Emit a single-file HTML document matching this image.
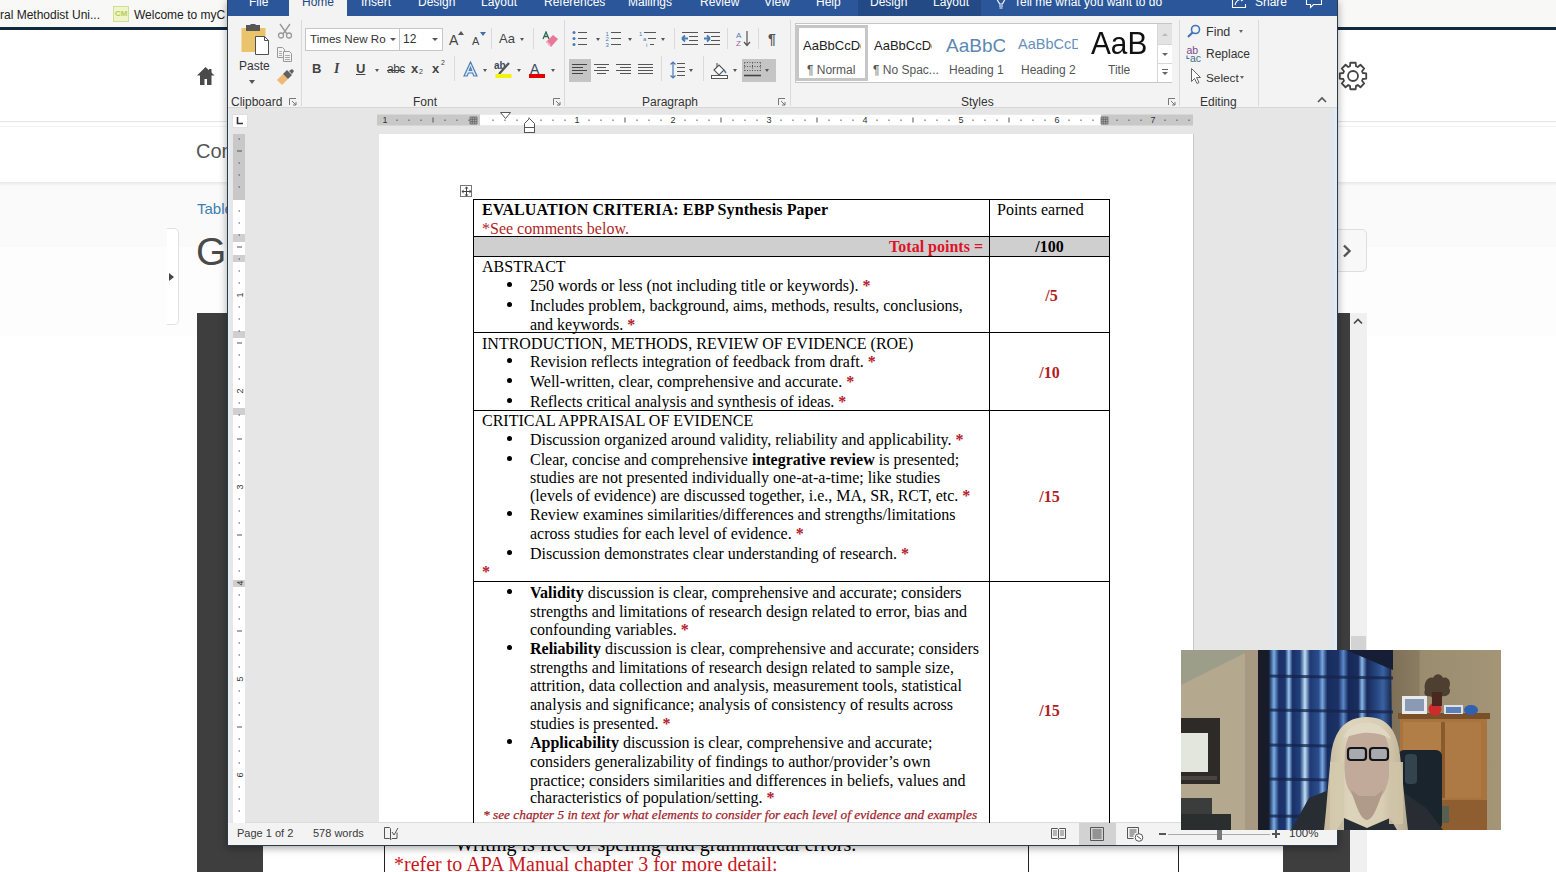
<!DOCTYPE html>
<html><head><meta charset="utf-8">
<style>
*{margin:0;padding:0;box-sizing:border-box}
html,body{width:1556px;height:872px;overflow:hidden;background:#fff;font-family:"Liberation Sans",sans-serif}
.a{position:absolute}
.t{position:absolute;white-space:nowrap}
/* browser */
#bm{left:0;top:0;width:1556px;height:27px;background:#f8f8f7}
#navy{left:0;top:27px;width:1556px;height:3px;background:#10293f}
#hdr{left:0;top:30px;width:1556px;height:91px;background:#fff}
.hl{left:0;width:1556px;height:1px;background:#e4e4e4}
#dark1{left:197px;top:313px;width:66px;height:559px;background:#3e3e3e}
#dark2{left:1283px;top:313px;width:67px;height:559px;background:#3e3e3e}
#pg2{left:263px;top:313px;width:1020px;height:559px;background:#fff}
#sb2{left:1350px;top:313px;width:17px;height:559px;background:#f0f0f0}
/* word */
#win{left:227px;top:0;width:1111px;height:846px;background:#e6e6e6;border:1px solid #2c3a4a;border-top:none;box-shadow:0 2px 8px rgba(0,0,0,.35)}
#tabs{left:0;top:0;width:1109px;height:16px;background:#2b579a}
.tab{position:absolute;top:-5px;font-size:12px;color:#fff;white-space:nowrap}
#rib{left:0;top:16px;width:1109px;height:92px;background:#f3f3f3;border-bottom:1px solid #d6d6d6}
.rl{position:absolute;font-size:12px;color:#262626;white-space:nowrap}
.vsep{position:absolute;width:1px;background:#dadada}
#status{left:0;top:822px;width:1109px;height:23px;background:#f3f3f3;border-top:1px solid #dcdcdc}
.page{left:151px;top:134px;width:815px;height:688px;background:#fff;border-right:1px solid #c8c8c8}
/* doc text */
.d{position:absolute;white-space:nowrap;font-family:"Liberation Serif",serif;font-size:16px;color:#000;line-height:1}
.r{color:#c0161c}
.b{font-weight:bold}
.bul{position:absolute;width:5px;height:5px;border-radius:50%;background:#000}
</style></head><body>
<!-- browser background -->
<div class="a" id="bm"></div>
<div class="t" style="left:0;top:8px;font-size:12px;color:#222">ral Methodist Uni...</div>
<div class="a" style="left:113px;top:6px;width:16px;height:16px;background:#eef5c8;border:1px solid #d3dd9a"></div>
<div class="t" style="left:115px;top:9px;font-size:8px;color:#b8cc55;font-weight:bold">CM</div>
<div class="t" style="left:134px;top:8px;font-size:12px;color:#222">Welcome to myC</div>
<div class="a" id="navy"></div>
<div class="a hl" style="top:121px"></div>
<div class="a hl" style="top:126px;background:#f2f2f2"></div>
<div class="a" style="left:0;top:182px;width:1556px;height:65px;background:#fafafa"></div>
<div class="a" style="left:0;top:247px;width:1556px;height:89px;background:#fdfdfd"></div>
<div class="a" style="left:0;top:182px;width:1556px;height:4px;background:linear-gradient(#e8e8e8,#fafafa)"></div>
<svg class="a" style="left:196px;top:66px" width="20" height="20" viewBox="0 0 20 20">
 <path d="M9.5 1L1 9.5h3V19h4.5v-6h2.5v6h4.5V9.5H18.5z" fill="#4a4a4a"/>
 <rect x="13" y="3" width="2.5" height="4.5" fill="#4a4a4a"/>
</svg>
<svg class="a" style="left:1338px;top:61px" width="30" height="30" viewBox="0 0 30 30">
 <path d="M24.74 11.99 L28.23 12.32 L28.23 17.68 L24.74 18.01 L24.02 19.76 L26.25 22.46 L22.46 26.25 L19.76 24.02 L18.01 24.74 L17.68 28.23 L12.32 28.23 L11.99 24.74 L10.24 24.02 L7.54 26.25 L3.75 22.46 L5.98 19.76 L5.26 18.01 L1.77 17.68 L1.77 12.32 L5.26 11.99 L5.98 10.24 L3.75 7.54 L7.54 3.75 L10.24 5.98 L11.99 5.26 L12.32 1.77 L17.68 1.77 L18.01 5.26 L19.76 5.98 L22.46 3.75 L26.25 7.54 L24.02 10.24Z" fill="#fff" stroke="#444" stroke-width="1.8" stroke-linejoin="round"/>
 <circle cx="15" cy="15" r="5" fill="none" stroke="#444" stroke-width="1.8"/>
</svg>
<div class="t" style="left:196px;top:140px;font-size:20px;color:#555">Con</div>
<div class="t" style="left:197px;top:200px;font-size:15px;color:#3a7fb5">Table</div>
<div class="t" style="left:196px;top:230px;font-size:39px;color:#4a4a4a">G</div>
<div class="a" style="left:167px;top:228px;width:12px;height:97px;background:#fff;border:1px solid #e0e0e0;border-left:none;border-radius:0 5px 5px 0"></div>
<div class="a" style="left:169px;top:273px;width:0;height:0;border-left:5px solid #444;border-top:4px solid transparent;border-bottom:4px solid transparent"></div>
<div class="a" style="left:1330px;top:229px;width:37px;height:43px;background:#f8f8f8;border:1px solid #dedede;border-radius:0 5px 5px 0"></div>
<svg class="a" style="left:1342px;top:244px" width="10" height="14" viewBox="0 0 10 14"><path d="M2 1.5l5.5 5.5L2 12.5" stroke="#555" stroke-width="2.4" fill="none"/></svg>
<div class="a" id="dark1"></div>
<div class="a" id="pg2"></div>
<div class="a" id="dark2"></div>
<div class="a" id="sb2"></div>
<div class="a" style="left:1351px;top:636px;width:15px;height:100px;background:#d3d3d3"></div>
<svg class="a" style="left:1352px;top:317px" width="12" height="8" viewBox="0 0 12 8"><path d="M2 6.5l4-4 4 4" stroke="#444" stroke-width="1.6" fill="none"/></svg>
<div class="a" style="left:384px;top:846px;width:1px;height:26px;background:#222"></div>
<div class="a" style="left:1028px;top:846px;width:1px;height:26px;background:#222"></div>
<div class="a" style="left:1178px;top:846px;width:1px;height:26px;background:#222"></div>
<div class="t" style="left:455px;top:833px;font-family:'Liberation Serif',serif;font-size:20px;color:#000">Writing is free of spelling and grammatical errors.</div>
<div class="t" style="left:394px;top:852.5px;font-family:'Liberation Serif',serif;font-size:20px;color:#c8161c">*refer to APA Manual chapter 3 for more detail:</div>

<!-- word window -->
<div class="a" id="win">
  <div class="a" id="tabs">
    <div class="a" style="left:1px;top:0;width:61px;height:16px;background:#2b579a"></div>
    <div class="a" style="left:61px;top:0;width:58px;height:16px;background:#f3f3f3"></div>
    <div class="a" style="left:630px;top:0;width:123px;height:16px;background:#234a85"></div>
    <span class="tab" style="left:21px">File</span>
    <span class="tab" style="left:74px;color:#24487e">Home</span>
    <span class="tab" style="left:133px">Insert</span>
    <span class="tab" style="left:190px">Design</span>
    <span class="tab" style="left:253px">Layout</span>
    <span class="tab" style="left:316px">References</span>
    <span class="tab" style="left:400px">Mailings</span>
    <span class="tab" style="left:472px">Review</span>
    <span class="tab" style="left:536px">View</span>
    <span class="tab" style="left:588px">Help</span>
    <span class="tab" style="left:642px">Design</span>
    <span class="tab" style="left:705px">Layout</span>
    <span class="tab" style="left:786px">Tell me what you want to do</span>
    <span class="tab" style="left:1027px">Share</span>
  </div>
  <div class="a" id="rib">
  </div>
  <div class="a page"></div>
  <div class="a" id="status">
    <span class="rl" style="left:9px;top:4px;color:#3a3a3a;font-size:11px">Page 1 of 2</span>
    <span class="rl" style="left:85px;top:4px;color:#3a3a3a;font-size:11px">578 words</span>
  </div>
</div>

<!-- ribbon -->
<!-- clipboard group -->
<svg class="a" style="left:240px;top:24px" width="30" height="32" viewBox="0 0 30 32">
 <rect x="1.5" y="4" width="24" height="24" fill="#eac46a"/>
 <rect x="6" y="1" width="14" height="6" fill="#565656"/>
 <rect x="10.5" y="0" width="5" height="3" fill="#565656"/>
 <path d="M15.5 12.5h9l4 4v14h-13z" fill="#fff" stroke="#505050" stroke-width="1"/>
 <path d="M24.5 12.5v4h4" fill="none" stroke="#505050" stroke-width="1"/>
</svg>
<div class="rl" style="left:239px;top:59px;color:#333">Paste</div>
<div class="a" style="left:249px;top:80px;width:0;height:0;border-top:4px solid #555;border-left:3.5px solid transparent;border-right:3.5px solid transparent"></div>
<svg class="a" style="left:277px;top:23px" width="16" height="16" viewBox="0 0 16 16">
 <path d="M3 1l7 10M13 1L6 11" stroke="#9a9a9a" stroke-width="1.4" fill="none"/>
 <circle cx="4" cy="12.5" r="2.5" stroke="#9a9a9a" stroke-width="1.3" fill="none"/>
 <circle cx="12" cy="12.5" r="2.5" stroke="#9a9a9a" stroke-width="1.3" fill="none"/>
</svg>
<svg class="a" style="left:276px;top:47px" width="17" height="15" viewBox="0 0 17 15">
 <path d="M1.5 0.5h5l2 2v8h-7z" fill="#f3f3f3" stroke="#999"/>
 <path d="M3 4.5h3M3 6.5h3M3 8.5h3" stroke="#aaa"/>
 <path d="M7.5 4.5h6l2 2v8h-8z" fill="#f3f3f3" stroke="#999"/>
 <path d="M9 8.5h5M9 10.5h5M9 12.5h5" stroke="#aaa"/>
</svg>
<svg class="a" style="left:276px;top:69px" width="18" height="17" viewBox="0 0 18 17">
 <path d="M1 11l6-6 5 5-6 6z" fill="#f0b870"/>
 <path d="M7 5l4-4 5 5-4 4z" fill="#606060"/>
 <path d="M13 2l3-2 2 2-2 3z" fill="#606060"/>
</svg>
<div class="rl" style="left:231px;top:95px;color:#333">Clipboard</div>
<svg class="a" style="left:289px;top:98px" width="8" height="8" viewBox="0 0 8 8"><path d="M0.5 7V0.5H7" fill="none" stroke="#777"/><path d="M3 3l4 4M7 4v3H4" fill="none" stroke="#777"/></svg>
<div class="vsep" style="left:301px;top:20px;height:86px"></div>
<!-- font group -->
<div class="a" style="left:305px;top:28px;width:138px;height:23px;background:#fff;border:1px solid #c6c6c6"></div>
<div class="a" style="left:399px;top:29px;width:1px;height:21px;background:#c6c6c6"></div>
<div class="rl" style="left:310px;top:32px;color:#333;font-size:11.6px">Times New Ro</div>
<div class="rl" style="left:403px;top:32px;color:#333">12</div>
<div class="a" style="left:390px;top:38px;width:0;height:0;border-top:3px solid #555;border-left:3px solid transparent;border-right:3px solid transparent"></div>
<div class="a" style="left:432px;top:38px;width:0;height:0;border-top:3px solid #555;border-left:3px solid transparent;border-right:3px solid transparent"></div>
<!-- grow/shrink -->
<div class="t" style="left:449px;top:32px;font-size:14px;color:#444">A</div>
<div class="a" style="left:458px;top:31px;width:0;height:0;border-bottom:4px solid #555;border-left:3px solid transparent;border-right:3px solid transparent"></div>
<div class="t" style="left:472px;top:35px;font-size:11px;color:#444">A</div>
<div class="a" style="left:480px;top:32px;width:0;height:0;border-top:4px solid #3f6fa8;border-left:3.5px solid transparent;border-right:3.5px solid transparent"></div>
<div class="vsep" style="left:491px;top:28px;height:21px"></div>
<div class="t" style="left:499px;top:31px;font-size:13px;color:#444">Aa</div>
<div class="a" style="left:520px;top:38px;width:0;height:0;border-top:3px solid #555;border-left:2.5px solid transparent;border-right:2.5px solid transparent"></div>
<div class="vsep" style="left:533px;top:28px;height:21px"></div>
<svg class="a" style="left:542px;top:31px" width="18" height="17" viewBox="0 0 18 17">
 <path d="M1 8L4 1l3 7M2.3 5.5h3.4" stroke="#2f6b4f" stroke-width="1.3" fill="none"/>
 <path d="M4 11l7-7 5 4-7 8z" fill="#e8779a"/>
 <path d="M4 11l3 4 2-1-4-4z" fill="#f3b8c9"/>
</svg>
<!-- row 2 -->
<div class="t" style="left:312px;top:61px;font-size:13px;font-weight:bold;color:#444">B</div>
<div class="t" style="left:334px;top:61px;font-size:14px;font-style:italic;font-weight:bold;font-family:'Liberation Serif',serif;color:#444">I</div>
<div class="t" style="left:356px;top:61px;font-size:13px;font-weight:bold;color:#444;text-decoration:underline">U</div>
<div class="a" style="left:375px;top:69px;width:0;height:0;border-top:3px solid #555;border-left:2.5px solid transparent;border-right:2.5px solid transparent"></div>
<div class="t" style="left:387px;top:62px;font-size:12px;color:#444;letter-spacing:-0.5px">abc</div>
<div class="a" style="left:387px;top:70px;width:17px;height:1px;background:#444"></div>
<div class="t" style="left:411px;top:61px;font-size:13px;font-weight:bold;color:#444">x</div>
<div class="t" style="left:419px;top:68px;font-size:7px;color:#444">2</div>
<div class="t" style="left:432px;top:61px;font-size:13px;font-weight:bold;color:#444">x</div>
<div class="t" style="left:441px;top:59px;font-size:7px;color:#444">2</div>
<div class="vsep" style="left:454px;top:56px;height:25px"></div>
<svg class="a" style="left:462px;top:61px" width="17" height="17" viewBox="0 0 17 17">
 <path d="M2 15L8.5 1 15 15h-3.2l-1.2-3H6.4l-1.2 3z M7.4 9.3h2.2L8.5 6.5z" fill="#dbe8f6" stroke="#4d7fb8" stroke-width="1.2"/>
</svg>
<div class="a" style="left:483px;top:69px;width:0;height:0;border-top:3px solid #555;border-left:2.5px solid transparent;border-right:2.5px solid transparent"></div>
<svg class="a" style="left:494px;top:60px" width="20" height="19" viewBox="0 0 20 19">
 <text x="0" y="9" font-family="Liberation Sans" font-size="10" font-weight="bold" fill="#3a4a5e">ab</text>
 <path d="M5 14L15 3" stroke="#555" stroke-width="2.2"/>
 <rect x="1.5" y="14" width="16" height="4" fill="#f2f20a"/>
</svg>
<div class="a" style="left:517px;top:69px;width:0;height:0;border-top:3px solid #555;border-left:2.5px solid transparent;border-right:2.5px solid transparent"></div>
<div class="t" style="left:530px;top:61px;font-size:14px;color:#3a4a5e">A</div>
<div class="a" style="left:529px;top:74px;width:16px;height:4px;background:#e00000"></div>
<div class="a" style="left:551px;top:69px;width:0;height:0;border-top:3px solid #555;border-left:2.5px solid transparent;border-right:2.5px solid transparent"></div>
<div class="rl" style="left:413px;top:95px;color:#333">Font</div>
<svg class="a" style="left:553px;top:98px" width="8" height="8" viewBox="0 0 8 8"><path d="M0.5 7V0.5H7" fill="none" stroke="#777"/><path d="M3 3l4 4M7 4v3H4" fill="none" stroke="#777"/></svg>
<div class="vsep" style="left:564px;top:20px;height:86px"></div>
<!-- paragraph -->
<svg class="a" style="left:572px;top:31px" width="16" height="15" viewBox="0 0 16 15">
 <circle cx="2" cy="1.5" r="1.5" fill="#4a7bb5"/><circle cx="2" cy="7.5" r="1.5" fill="#4a7bb5"/><circle cx="2" cy="13.5" r="1.5" fill="#4a7bb5"/>
 <path d="M6 1.5h9M6 7.5h9M6 13.5h9" stroke="#555" stroke-width="1"/>
</svg>
<div class="a" style="left:596px;top:38px;width:0;height:0;border-top:3px solid #555;border-left:2.5px solid transparent;border-right:2.5px solid transparent"></div>
<svg class="a" style="left:605px;top:30px" width="17" height="18" viewBox="0 0 17 18">
 <text x="0.5" y="6" font-family="Liberation Sans" font-size="6" fill="#4a7bb5">1</text>
 <text x="0.5" y="11" font-family="Liberation Sans" font-size="6" fill="#4a7bb5">2</text>
 <text x="0.5" y="16.5" font-family="Liberation Sans" font-size="6" fill="#4a7bb5">3</text>
 <path d="M6 2.5h10M6 8.5h10M6 14.5h10" stroke="#555" stroke-width="1"/>
</svg>
<div class="a" style="left:628px;top:38px;width:0;height:0;border-top:3px solid #555;border-left:2.5px solid transparent;border-right:2.5px solid transparent"></div>
<svg class="a" style="left:639px;top:30px" width="18" height="17" viewBox="0 0 18 17">
 <text x="0" y="6" font-family="Liberation Sans" font-size="6" fill="#4a7bb5">1</text>
 <text x="4" y="11" font-family="Liberation Sans" font-size="6" fill="#4a7bb5">a</text>
 <text x="7" y="16.5" font-family="Liberation Sans" font-size="6" fill="#4a7bb5">i</text>
 <path d="M5 2.5h12M9 8.5h8M11 14.5h4" stroke="#555" stroke-width="1"/>
</svg>
<div class="a" style="left:661px;top:38px;width:0;height:0;border-top:3px solid #555;border-left:2.5px solid transparent;border-right:2.5px solid transparent"></div>
<div class="vsep" style="left:674px;top:28px;height:21px"></div>
<svg class="a" style="left:681px;top:31px" width="18" height="15" viewBox="0 0 18 15">
 <path d="M1 1.5h16M8 5.5h9M8 9.5h9M1 13.5h16" stroke="#555" stroke-width="1"/>
 <path d="M1 7.5h6M1 7.5l3-3M1 7.5l3 3" stroke="#4a7bb5" stroke-width="1.8" fill="none"/>
</svg>
<svg class="a" style="left:703px;top:31px" width="18" height="15" viewBox="0 0 18 15">
 <path d="M1 1.5h16M8 5.5h9M8 9.5h9M1 13.5h16" stroke="#555" stroke-width="1"/>
 <path d="M1 7.5h6M7 7.5l-3-3M7 7.5l-3 3" stroke="#4a7bb5" stroke-width="1.8" fill="none"/>
</svg>
<div class="vsep" style="left:727px;top:28px;height:21px"></div>
<svg class="a" style="left:736px;top:30px" width="16" height="17" viewBox="0 0 16 17">
 <text x="0" y="8" font-family="Liberation Sans" font-size="8" fill="#4a7bb5">A</text>
 <text x="0" y="16" font-family="Liberation Sans" font-size="8" fill="#9b5fa0">Z</text>
 <path d="M11 1v14M8 12l3 3.5 3-3.5" stroke="#555" stroke-width="1.2" fill="none"/>
</svg>
<div class="vsep" style="left:758px;top:28px;height:21px"></div>
<div class="t" style="left:768px;top:31px;font-size:14px;font-weight:bold;color:#555">¶</div>
<!-- row 2 -->
<div class="a" style="left:569px;top:59px;width:22px;height:23px;background:#c5c5c5"></div>
<svg class="a" style="left:572px;top:63px" width="16" height="14" viewBox="0 0 16 14">
 <path d="M0 1.5h15M0 4.5h11M0 7.5h15M0 10.5h11" stroke="#444" stroke-width="1"/>
</svg>
<svg class="a" style="left:594px;top:63px" width="16" height="14" viewBox="0 0 16 14">
 <path d="M0 1.5h15M3 4.5h9M0 7.5h15M3 10.5h9" stroke="#555" stroke-width="1"/>
</svg>
<svg class="a" style="left:616px;top:63px" width="16" height="14" viewBox="0 0 16 14">
 <path d="M0 1.5h15M4 4.5h11M0 7.5h15M4 10.5h11" stroke="#555" stroke-width="1"/>
</svg>
<svg class="a" style="left:638px;top:63px" width="16" height="14" viewBox="0 0 16 14">
 <path d="M0 1.5h15M0 4.5h15M0 7.5h15M0 10.5h15" stroke="#555" stroke-width="1"/>
</svg>
<div class="vsep" style="left:661px;top:56px;height:25px"></div>
<svg class="a" style="left:670px;top:61px" width="16" height="18" viewBox="0 0 16 18">
 <path d="M3 1v16M0.5 3.5L3 1l2.5 2.5M0.5 14.5L3 17l2.5-2.5" stroke="#4a7bb5" stroke-width="1.2" fill="none"/>
 <path d="M7 2.5h8M7 6.5h8M7 10.5h8M7 14.5h8" stroke="#555" stroke-width="1"/>
</svg>
<div class="a" style="left:689px;top:69px;width:0;height:0;border-top:3px solid #555;border-left:2.5px solid transparent;border-right:2.5px solid transparent"></div>
<div class="vsep" style="left:703px;top:56px;height:25px"></div>
<svg class="a" style="left:710px;top:61px" width="19" height="18" viewBox="0 0 19 18">
 <path d="M4 9l5-5 5 5-5 5z" fill="#fff" stroke="#555" stroke-width="1.1"/>
 <path d="M7 2v4" stroke="#555" stroke-width="1.1"/>
 <path d="M14 9l2 3" stroke="#4a7bb5" stroke-width="1.5"/>
 <rect x="1.5" y="14.5" width="16" height="3" fill="#fff" stroke="#555"/>
</svg>
<div class="a" style="left:733px;top:69px;width:0;height:0;border-top:3px solid #555;border-left:2.5px solid transparent;border-right:2.5px solid transparent"></div>
<div class="a" style="left:742px;top:59px;width:34px;height:23px;background:#c5c5c5"></div>
<svg class="a" style="left:744px;top:62px" width="17" height="16" viewBox="0 0 17 16">
 <path d="M0.5 0.5h16M0.5 4.5h16M0.5 8.5h16M0.5 0.5v10M8.5 0.5v10M16.5 0.5v10" stroke="#555" stroke-width="1" stroke-dasharray="1 1.5" fill="none"/>
 <path d="M0 13.5h17" stroke="#444" stroke-width="1.6"/>
</svg>
<div class="a" style="left:765px;top:69px;width:0;height:0;border-top:3px solid #555;border-left:2.5px solid transparent;border-right:2.5px solid transparent"></div>
<div class="rl" style="left:642px;top:95px;color:#333">Paragraph</div>
<svg class="a" style="left:778px;top:98px" width="8" height="8" viewBox="0 0 8 8"><path d="M0.5 7V0.5H7" fill="none" stroke="#777"/><path d="M3 3l4 4M7 4v3H4" fill="none" stroke="#777"/></svg>
<div class="vsep" style="left:790px;top:20px;height:86px"></div>
<!-- styles -->
<div class="a" style="left:795px;top:23px;width:377px;height:60px;background:#fff;border:1px solid #c6c6c6"></div>
<div class="a" style="left:796px;top:25px;width:72px;height:56px;border:3px solid #c6c6c6"></div>
<div class="t" style="left:803px;top:38px;font-size:13px;color:#222;width:58px;overflow:hidden">AaBbCcDc</div>
<div class="t" style="left:807px;top:63px;font-size:12px;color:#555">¶ Normal</div>
<div class="t" style="left:874px;top:38px;font-size:13px;color:#222;width:58px;overflow:hidden">AaBbCcDc</div>
<div class="t" style="left:873px;top:63px;font-size:12px;color:#555">¶ No Spac...</div>
<div class="t" style="left:946px;top:35px;font-size:19px;color:#5a88b4;width:59px;overflow:hidden">AaBbCc</div>
<div class="t" style="left:949px;top:63px;font-size:12px;color:#555">Heading 1</div>
<div class="t" style="left:1018px;top:36px;font-size:14.5px;color:#6590bb;width:60px;overflow:hidden">AaBbCcD</div>
<div class="t" style="left:1021px;top:63px;font-size:12px;color:#555">Heading 2</div>
<div class="a" style="left:1086px;top:30px;width:70px;height:30px;overflow:hidden"><div class="t" style="left:5px;top:-3px;font-size:32px;line-height:32px;color:#111;transform:scaleX(0.93);transform-origin:left">AaB</div></div>
<div class="t" style="left:1108px;top:63px;font-size:12px;color:#555">Title</div>
<div class="a" style="left:1157px;top:24px;width:15px;height:58px;background:#fff;border-left:1px solid #d6d6d6"></div>
<div class="a" style="left:1158px;top:24px;width:14px;height:20px;background:#e3e3e3"></div>
<div class="a" style="left:1158px;top:63px;width:14px;height:1px;background:#d6d6d6"></div>
<div class="a" style="left:1158px;top:44px;width:14px;height:1px;background:#d6d6d6"></div>
<div class="a" style="left:1162px;top:33px;width:0;height:0;border-bottom:3px solid #bbb;border-left:3px solid transparent;border-right:3px solid transparent"></div>
<div class="a" style="left:1162px;top:53px;width:0;height:0;border-top:3px solid #666;border-left:3px solid transparent;border-right:3px solid transparent"></div>
<div class="a" style="left:1162px;top:69px;width:6px;height:1px;background:#666"></div>
<div class="a" style="left:1162px;top:72px;width:0;height:0;border-top:3px solid #666;border-left:3px solid transparent;border-right:3px solid transparent"></div>
<div class="rl" style="left:961px;top:95px;color:#333">Styles</div>
<svg class="a" style="left:1168px;top:98px" width="8" height="8" viewBox="0 0 8 8"><path d="M0.5 7V0.5H7" fill="none" stroke="#777"/><path d="M3 3l4 4M7 4v3H4" fill="none" stroke="#777"/></svg>
<div class="vsep" style="left:1179px;top:20px;height:86px"></div>
<!-- editing -->
<svg class="a" style="left:1187px;top:24px" width="14" height="14" viewBox="0 0 14 14">
 <circle cx="8.5" cy="5.5" r="4" stroke="#3f75b3" stroke-width="1.6" fill="none"/>
 <path d="M5.5 8.5L1 13" stroke="#3f75b3" stroke-width="2.2"/>
</svg>
<div class="rl" style="left:1206px;top:25px;font-size:12.5px;color:#333">Find</div>
<div class="a" style="left:1239px;top:30px;width:0;height:0;border-top:3px solid #666;border-left:2.5px solid transparent;border-right:2.5px solid transparent"></div>
<svg class="a" style="left:1186px;top:45px" width="18" height="18" viewBox="0 0 18 18">
 <text x="0.5" y="8.5" font-family="Liberation Sans" font-size="10.5" fill="#7b4a8a">ab</text>
 <text x="4" y="17" font-family="Liberation Sans" font-size="10.5" fill="#3f6f8a">ac</text>
 <path d="M1 10.5v3h2.5" stroke="#3f75b3" stroke-width="1.1" fill="none"/>
</svg>
<div class="rl" style="left:1206px;top:47px;font-size:12px;color:#333">Replace</div>
<svg class="a" style="left:1190px;top:67px" width="12" height="18" viewBox="0 0 12 18">
 <path d="M1.5 1.5v13l3-3 2.5 5 2-1-2.5-5h4z" fill="#fff" stroke="#666" stroke-width="1"/>
</svg>
<div class="rl" style="left:1206px;top:71px;font-size:11.8px;color:#333">Select</div>
<div class="a" style="left:1240px;top:76px;width:0;height:0;border-top:3px solid #666;border-left:2.5px solid transparent;border-right:2.5px solid transparent"></div>
<div class="rl" style="left:1200px;top:95px;color:#333">Editing</div>
<div class="vsep" style="left:1258px;top:20px;height:86px"></div>
<svg class="a" style="left:1317px;top:96px" width="10" height="7" viewBox="0 0 10 7"><path d="M1 6l4-4 4 4" stroke="#555" stroke-width="1.6" fill="none"/></svg>

<div class="a" style="left:1328px;top:109px;width:9px;height:714px;background:linear-gradient(90deg,#e5e5e5,#dfe6ee 60%,#e2ebf5)"></div>
<div class="a" style="left:228px;top:109px;width:4px;height:714px;background:linear-gradient(90deg,#e6eef6,#e5e5e5)"></div>
<svg class="a" style="left:377px;top:114px" width="816" height="12" viewBox="0 0 816 12"><rect x="0" y="0.5" width="816" height="11" fill="#c8c8c8"/><rect x="103" y="0.5" width="621" height="11" fill="#fff"/><text x="8" y="9" font-family="Liberation Sans" font-size="9" fill="#333" text-anchor="middle">1</text><rect x="19.5" y="5.5" width="1" height="1.5" fill="#555"/><rect x="31.5" y="5.5" width="1" height="1.5" fill="#555"/><rect x="43.5" y="5.5" width="1" height="1.5" fill="#555"/><rect x="55.5" y="3.5" width="1" height="5" fill="#555"/><rect x="67.5" y="5.5" width="1" height="1.5" fill="#555"/><rect x="79.5" y="5.5" width="1" height="1.5" fill="#555"/><rect x="91.5" y="5.5" width="1" height="1.5" fill="#555"/><rect x="115.5" y="5.5" width="1" height="1.5" fill="#555"/><rect x="127.5" y="5.5" width="1" height="1.5" fill="#555"/><rect x="139.5" y="5.5" width="1" height="1.5" fill="#555"/><rect x="151.5" y="3.5" width="1" height="5" fill="#555"/><rect x="163.5" y="5.5" width="1" height="1.5" fill="#555"/><rect x="175.5" y="5.5" width="1" height="1.5" fill="#555"/><rect x="187.5" y="5.5" width="1" height="1.5" fill="#555"/><text x="200" y="9" font-family="Liberation Sans" font-size="9" fill="#333" text-anchor="middle">1</text><rect x="211.5" y="5.5" width="1" height="1.5" fill="#555"/><rect x="223.5" y="5.5" width="1" height="1.5" fill="#555"/><rect x="235.5" y="5.5" width="1" height="1.5" fill="#555"/><rect x="247.5" y="3.5" width="1" height="5" fill="#555"/><rect x="259.5" y="5.5" width="1" height="1.5" fill="#555"/><rect x="271.5" y="5.5" width="1" height="1.5" fill="#555"/><rect x="283.5" y="5.5" width="1" height="1.5" fill="#555"/><text x="296" y="9" font-family="Liberation Sans" font-size="9" fill="#333" text-anchor="middle">2</text><rect x="307.5" y="5.5" width="1" height="1.5" fill="#555"/><rect x="319.5" y="5.5" width="1" height="1.5" fill="#555"/><rect x="331.5" y="5.5" width="1" height="1.5" fill="#555"/><rect x="343.5" y="3.5" width="1" height="5" fill="#555"/><rect x="355.5" y="5.5" width="1" height="1.5" fill="#555"/><rect x="367.5" y="5.5" width="1" height="1.5" fill="#555"/><rect x="379.5" y="5.5" width="1" height="1.5" fill="#555"/><text x="392" y="9" font-family="Liberation Sans" font-size="9" fill="#333" text-anchor="middle">3</text><rect x="403.5" y="5.5" width="1" height="1.5" fill="#555"/><rect x="415.5" y="5.5" width="1" height="1.5" fill="#555"/><rect x="427.5" y="5.5" width="1" height="1.5" fill="#555"/><rect x="439.5" y="3.5" width="1" height="5" fill="#555"/><rect x="451.5" y="5.5" width="1" height="1.5" fill="#555"/><rect x="463.5" y="5.5" width="1" height="1.5" fill="#555"/><rect x="475.5" y="5.5" width="1" height="1.5" fill="#555"/><text x="488" y="9" font-family="Liberation Sans" font-size="9" fill="#333" text-anchor="middle">4</text><rect x="499.5" y="5.5" width="1" height="1.5" fill="#555"/><rect x="511.5" y="5.5" width="1" height="1.5" fill="#555"/><rect x="523.5" y="5.5" width="1" height="1.5" fill="#555"/><rect x="535.5" y="3.5" width="1" height="5" fill="#555"/><rect x="547.5" y="5.5" width="1" height="1.5" fill="#555"/><rect x="559.5" y="5.5" width="1" height="1.5" fill="#555"/><rect x="571.5" y="5.5" width="1" height="1.5" fill="#555"/><text x="584" y="9" font-family="Liberation Sans" font-size="9" fill="#333" text-anchor="middle">5</text><rect x="595.5" y="5.5" width="1" height="1.5" fill="#555"/><rect x="607.5" y="5.5" width="1" height="1.5" fill="#555"/><rect x="619.5" y="5.5" width="1" height="1.5" fill="#555"/><rect x="631.5" y="3.5" width="1" height="5" fill="#555"/><rect x="643.5" y="5.5" width="1" height="1.5" fill="#555"/><rect x="655.5" y="5.5" width="1" height="1.5" fill="#555"/><rect x="667.5" y="5.5" width="1" height="1.5" fill="#555"/><text x="680" y="9" font-family="Liberation Sans" font-size="9" fill="#333" text-anchor="middle">6</text><rect x="691.5" y="5.5" width="1" height="1.5" fill="#555"/><rect x="703.5" y="5.5" width="1" height="1.5" fill="#555"/><rect x="715.5" y="5.5" width="1" height="1.5" fill="#555"/><rect x="727.5" y="3.5" width="1" height="5" fill="#555"/><rect x="739.5" y="5.5" width="1" height="1.5" fill="#555"/><rect x="751.5" y="5.5" width="1" height="1.5" fill="#555"/><rect x="763.5" y="5.5" width="1" height="1.5" fill="#555"/><text x="776" y="9" font-family="Liberation Sans" font-size="9" fill="#333" text-anchor="middle">7</text><rect x="787.5" y="5.5" width="1" height="1.5" fill="#555"/><rect x="799.5" y="5.5" width="1" height="1.5" fill="#555"/><rect x="811.5" y="5.5" width="1" height="1.5" fill="#555"/><g transform="translate(93,3)"><path d="M0 0h7v7H0z M0 2.3h7M0 4.6h7M2.3 0v7M4.6 0v7" stroke="#666" stroke-width="0.8" fill="#aaa"/></g><g transform="translate(724,3)"><path d="M0 0h7v7H0z M0 2.3h7M0 4.6h7M2.3 0v7M4.6 0v7" stroke="#666" stroke-width="0.8" fill="#aaa"/></g></svg>
<svg class="a" style="left:499px;top:111px" width="13" height="10" viewBox="0 0 13 10"><path d="M1.5 1.5h10l-5 6z" fill="#fff" stroke="#555"/></svg>
<svg class="a" style="left:523px;top:117px" width="13" height="17" viewBox="0 0 13 17"><path d="M6.5 1.5l5 5v4h-10v-4z" fill="#fff" stroke="#555"/><rect x="1.5" y="10.5" width="10" height="5" fill="#fff" stroke="#555"/></svg>
<svg class="a" style="left:233px;top:134px" width="12" height="689" viewBox="0 0 12 689"><rect x="0" y="0" width="12" height="689" fill="#fff"/><rect x="0" y="0" width="12" height="66" fill="#c8c8c8"/><rect x="0" y="100" width="12" height="8" fill="#cfcfcf"/><rect x="0" y="121" width="12" height="7" fill="#cfcfcf"/><rect x="0" y="197" width="12" height="7" fill="#cfcfcf"/><rect x="0" y="274" width="12" height="7" fill="#cfcfcf"/><rect x="0" y="446" width="12" height="7" fill="#cfcfcf"/><rect x="5.5" y="4.5" width="1.5" height="1" fill="#555"/><rect x="4" y="16.5" width="5" height="1" fill="#555"/><rect x="5.5" y="28.5" width="1.5" height="1" fill="#555"/><rect x="5.5" y="40.5" width="1.5" height="1" fill="#555"/><rect x="5.5" y="52.5" width="1.5" height="1" fill="#555"/><rect x="5.5" y="76.5" width="1.5" height="1" fill="#555"/><rect x="5.5" y="88.5" width="1.5" height="1" fill="#555"/><rect x="5.5" y="100.5" width="1.5" height="1" fill="#555"/><rect x="4" y="112.5" width="5" height="1" fill="#555"/><rect x="5.5" y="124.5" width="1.5" height="1" fill="#555"/><rect x="5.5" y="136.5" width="1.5" height="1" fill="#555"/><rect x="5.5" y="148.5" width="1.5" height="1" fill="#555"/><text x="0" y="0" transform="translate(9.5,161) rotate(-90)" font-family="Liberation Sans" font-size="9" fill="#333" text-anchor="middle">1</text><rect x="5.5" y="172.5" width="1.5" height="1" fill="#555"/><rect x="5.5" y="184.5" width="1.5" height="1" fill="#555"/><rect x="5.5" y="196.5" width="1.5" height="1" fill="#555"/><rect x="4" y="208.5" width="5" height="1" fill="#555"/><rect x="5.5" y="220.5" width="1.5" height="1" fill="#555"/><rect x="5.5" y="232.5" width="1.5" height="1" fill="#555"/><rect x="5.5" y="244.5" width="1.5" height="1" fill="#555"/><text x="0" y="0" transform="translate(9.5,257) rotate(-90)" font-family="Liberation Sans" font-size="9" fill="#333" text-anchor="middle">2</text><rect x="5.5" y="268.5" width="1.5" height="1" fill="#555"/><rect x="5.5" y="280.5" width="1.5" height="1" fill="#555"/><rect x="5.5" y="292.5" width="1.5" height="1" fill="#555"/><rect x="4" y="304.5" width="5" height="1" fill="#555"/><rect x="5.5" y="316.5" width="1.5" height="1" fill="#555"/><rect x="5.5" y="328.5" width="1.5" height="1" fill="#555"/><rect x="5.5" y="340.5" width="1.5" height="1" fill="#555"/><text x="0" y="0" transform="translate(9.5,353) rotate(-90)" font-family="Liberation Sans" font-size="9" fill="#333" text-anchor="middle">3</text><rect x="5.5" y="364.5" width="1.5" height="1" fill="#555"/><rect x="5.5" y="376.5" width="1.5" height="1" fill="#555"/><rect x="5.5" y="388.5" width="1.5" height="1" fill="#555"/><rect x="4" y="400.5" width="5" height="1" fill="#555"/><rect x="5.5" y="412.5" width="1.5" height="1" fill="#555"/><rect x="5.5" y="424.5" width="1.5" height="1" fill="#555"/><rect x="5.5" y="436.5" width="1.5" height="1" fill="#555"/><text x="0" y="0" transform="translate(9.5,449) rotate(-90)" font-family="Liberation Sans" font-size="9" fill="#333" text-anchor="middle">4</text><rect x="5.5" y="460.5" width="1.5" height="1" fill="#555"/><rect x="5.5" y="472.5" width="1.5" height="1" fill="#555"/><rect x="5.5" y="484.5" width="1.5" height="1" fill="#555"/><rect x="4" y="496.5" width="5" height="1" fill="#555"/><rect x="5.5" y="508.5" width="1.5" height="1" fill="#555"/><rect x="5.5" y="520.5" width="1.5" height="1" fill="#555"/><rect x="5.5" y="532.5" width="1.5" height="1" fill="#555"/><text x="0" y="0" transform="translate(9.5,545) rotate(-90)" font-family="Liberation Sans" font-size="9" fill="#333" text-anchor="middle">5</text><rect x="5.5" y="556.5" width="1.5" height="1" fill="#555"/><rect x="5.5" y="568.5" width="1.5" height="1" fill="#555"/><rect x="5.5" y="580.5" width="1.5" height="1" fill="#555"/><rect x="4" y="592.5" width="5" height="1" fill="#555"/><rect x="5.5" y="604.5" width="1.5" height="1" fill="#555"/><rect x="5.5" y="616.5" width="1.5" height="1" fill="#555"/><rect x="5.5" y="628.5" width="1.5" height="1" fill="#555"/><text x="0" y="0" transform="translate(9.5,641) rotate(-90)" font-family="Liberation Sans" font-size="9" fill="#333" text-anchor="middle">6</text><rect x="5.5" y="652.5" width="1.5" height="1" fill="#555"/><rect x="5.5" y="664.5" width="1.5" height="1" fill="#555"/><rect x="5.5" y="676.5" width="1.5" height="1" fill="#555"/></svg>
<div class="a" style="left:232px;top:114px;width:16px;height:14px;background:#fff;border:1px solid #e0e0e0"></div>
<svg class="a" style="left:236px;top:117px" width="8" height="8" viewBox="0 0 8 8"><path d="M1.5 0v6.5H7" stroke="#333" stroke-width="1.6" fill="none"/></svg>
<svg class="a" style="left:995px;top:-3px" width="12" height="12" viewBox="0 0 12 12"><path d="M2 1c0 3 2 4 2.5 6h3C8 5 10 4 10 1" stroke="#fff" stroke-width="1.1" fill="none"/><path d="M4 9h4M4.5 11h3" stroke="#fff" stroke-width="1.1"/></svg>
<svg class="a" style="left:1231px;top:-4px" width="17" height="13" viewBox="0 0 17 13"><path d="M1.5 3v8.5h13V8" stroke="#fff" stroke-width="1.1" fill="none"/><path d="M4 9c1-4 4-6 8-6M10 1l3 2-3 2" stroke="#fff" stroke-width="1.1" fill="none"/></svg>
<svg class="a" style="left:1305px;top:-4px" width="18" height="13" viewBox="0 0 18 13"><path d="M1.5 0.5v8h4v3l3-3h8V0.5" stroke="#fff" stroke-width="1.1" fill="none"/></svg>
<svg class="a" style="left:383px;top:826px" width="16" height="15" viewBox="0 0 16 15"><path d="M1.5 1.5h5l1 1v11l-1-1h-5z" fill="none" stroke="#555"/><path d="M9 6l2 3 4-7" stroke="#555" fill="none"/><path d="M8 13.5l1-1h5v-6" stroke="#555" fill="none"/></svg>
<svg class="a" style="left:1051px;top:827px" width="15" height="14" viewBox="0 0 15 14"><path d="M0.5 1.5h6l1 1 1-1h6v10h-6l-1 1-1-1h-6z M7.5 2.5v9" fill="none" stroke="#555"/><path d="M2 4h4M2 6h4M2 8h4M9 4h4M9 6h4M9 8h4" stroke="#777"/></svg>
<div class="a" style="left:1079px;top:823px;width:37px;height:22px;background:#d2d2d2"></div>
<svg class="a" style="left:1090px;top:827px" width="15" height="14" viewBox="0 0 15 14"><path d="M0.5 0.5h13v13h-13z" fill="none" stroke="#555"/><path d="M2.5 3h9M2.5 5h9M2.5 7h9M2.5 9h9M2.5 11h9" stroke="#555"/></svg>
<svg class="a" style="left:1127px;top:826px" width="17" height="16" viewBox="0 0 17 16"><path d="M0.5 1.5h11v7M0.5 1.5v11h6" fill="none" stroke="#555"/><path d="M2.5 4h7M2.5 6h7M2.5 8h5M2.5 10h4" stroke="#555"/><circle cx="12" cy="11.5" r="3.8" fill="#fff" stroke="#555"/><path d="M10 10l4 3" stroke="#555"/></svg>
<div class="a" style="left:1159px;top:833px;width:7px;height:2px;background:#555"></div>
<div class="a" style="left:1168px;top:833.5px;width:102px;height:1px;background:#aaa"></div>
<div class="a" style="left:1217px;top:828px;width:5px;height:12px;background:#777"></div>
<div class="a" style="left:1272px;top:833px;width:8px;height:2px;background:#555"></div>
<div class="a" style="left:1275px;top:830px;width:2px;height:8px;background:#555"></div>
<div class="t" style="left:1289px;top:827px;font-size:11.5px;color:#333">100%</div>

<!-- doc -->
<div class="a" style="left:0;top:0;width:1337px;height:823px;overflow:hidden">
<div class="a" style="left:474px;top:237px;width:636px;height:19px;background:#cfcfcf"></div>
<div class="a" style="left:473px;top:199px;width:637px;height:1px;background:#000"></div>
<div class="a" style="left:473px;top:236px;width:637px;height:1px;background:#000"></div>
<div class="a" style="left:473px;top:256px;width:637px;height:1px;background:#000"></div>
<div class="a" style="left:473px;top:332px;width:637px;height:1px;background:#000"></div>
<div class="a" style="left:473px;top:410px;width:637px;height:1px;background:#000"></div>
<div class="a" style="left:473px;top:581px;width:637px;height:1px;background:#000"></div>
<div class="a" style="left:473px;top:199px;width:1px;height:624px;background:#000"></div>
<div class="a" style="left:989px;top:199px;width:1px;height:624px;background:#000"></div>
<div class="a" style="left:1109px;top:199px;width:1px;height:624px;background:#000"></div>
<div class="a" style="left:460px;top:185px;width:12px;height:12px;border:1px solid #777;background:#fff"></div>
<svg class="a" style="left:461px;top:186px" width="11" height="11" viewBox="0 0 11 11"><path d="M5.5 1.5v8M1.5 5.5h8" stroke="#444" stroke-width="1"/><path d="M5.5 0.5l-2 2h4zM5.5 10.5l-2-2h4zM0.5 5.5l2-2v4zM10.5 5.5l-2-2v4z" fill="#444"/></svg>
<div class="d" style="left:482px;top:202.3px;font-size:16px;"><b style="letter-spacing:0.11px">EVALUATION CRITERIA: EBP Synthesis Paper</b></div>
<div class="d" style="left:482px;top:220.7px;font-size:16px;"><span style="color:#b3202c">*</span><span style="color:#b01e24">See comments below.</span></div>
<div class="d" style="left:997px;top:202.1px;font-size:16px;">Points earned</div>
<div class="d b" style="left:600px;width:383px;text-align:right;top:238.8px;color:#dc1428">Total points =</div>
<div class="d b" style="left:990px;width:119px;text-align:center;top:238.8px">/100</div>
<div class="d" style="left:482px;top:259.1px;font-size:16px;">ABSTRACT</div>
<div class="bul" style="left:507px;top:282.0px"></div>
<div class="d" style="left:530px;top:278.0px;font-size:16px;">250 words or less (not including title or keywords). <b style="color:#b3202c">*</b></div>
<div class="bul" style="left:507px;top:301.8px"></div>
<div class="d" style="left:530px;top:297.8px;font-size:16px;">Includes problem, background, aims, methods, results, conclusions,</div>
<div class="d" style="left:530px;top:316.7px;font-size:16px;">and keywords. <b style="color:#b3202c">*</b></div>
<div class="d" style="left:482px;top:335.5px;font-size:16px;">INTRODUCTION, METHODS, REVIEW OF EVIDENCE (ROE)</div>
<div class="bul" style="left:507px;top:358.0px"></div>
<div class="d" style="left:530px;top:354.0px;font-size:16px;">Revision reflects integration of feedback from draft. <b style="color:#b3202c">*</b></div>
<div class="bul" style="left:507px;top:378.3px"></div>
<div class="d" style="left:530px;top:374.3px;font-size:16px;">Well-written, clear, comprehensive and accurate. <b style="color:#b3202c">*</b></div>
<div class="bul" style="left:507px;top:398.1px"></div>
<div class="d" style="left:530px;top:394.1px;font-size:16px;">Reflects critical analysis and synthesis of ideas. <b style="color:#b3202c">*</b></div>
<div class="d" style="left:482px;top:413.0px;font-size:16px;">CRITICAL APPRAISAL OF EVIDENCE</div>
<div class="bul" style="left:507px;top:436.0px"></div>
<div class="d" style="left:530px;top:432.0px;font-size:16px;">Discussion organized around validity, reliability and applicability. <b style="color:#b3202c">*</b></div>
<div class="bul" style="left:507px;top:455.5px"></div>
<div class="d" style="left:530px;top:451.5px;font-size:16px;">Clear, concise and comprehensive <b>integrative review</b> is presented;</div>
<div class="d" style="left:530px;top:470.2px;font-size:16px;">studies are not presented individually one-at-a-time; like studies</div>
<div class="d" style="left:530px;top:488.3px;font-size:16px;">(levels of evidence) are discussed together, i.e., MA, SR, RCT, etc. <b style="color:#b3202c">*</b></div>
<div class="bul" style="left:507px;top:511.2px"></div>
<div class="d" style="left:530px;top:507.2px;font-size:16px;">Review examines similarities/differences and strengths/limitations</div>
<div class="d" style="left:530px;top:526.1px;font-size:16px;">across studies for each level of evidence. <b style="color:#b3202c">*</b></div>
<div class="bul" style="left:507px;top:549.5px"></div>
<div class="d" style="left:530px;top:545.5px;font-size:16px;">Discussion demonstrates clear understanding of research. <b style="color:#b3202c">*</b></div>
<div class="d" style="left:482px;top:564.0px;font-size:16px;"><b style="color:#b3202c">*</b></div>
<div class="bul" style="left:507px;top:588.5px"></div>
<div class="d" style="left:530px;top:584.5px;font-size:16px;"><b>Validity</b> discussion is clear, comprehensive and accurate; considers</div>
<div class="d" style="left:530px;top:603.5px;font-size:16px;">strengths and limitations of research design related to error, bias and</div>
<div class="d" style="left:530px;top:622.2px;font-size:16px;">confounding variables. <b style="color:#b3202c">*</b></div>
<div class="bul" style="left:507px;top:644.6px"></div>
<div class="d" style="left:530px;top:640.6px;font-size:16px;"><b>Reliability</b> discussion is clear, comprehensive and accurate; considers</div>
<div class="d" style="left:530px;top:659.6px;font-size:16px;">strengths and limitations of research design related to sample size,</div>
<div class="d" style="left:530px;top:677.7px;font-size:16px;">attrition, data collection and analysis, measurement tools, statistical</div>
<div class="d" style="left:530px;top:696.5px;font-size:16px;">analysis and significance; analysis of consistency of results across</div>
<div class="d" style="left:530px;top:715.5px;font-size:16px;">studies is presented. <b style="color:#b3202c">*</b></div>
<div class="bul" style="left:507px;top:738.8px"></div>
<div class="d" style="left:530px;top:734.8px;font-size:16px;"><b>Applicability</b> discussion is clear, comprehensive and accurate;</div>
<div class="d" style="left:530px;top:753.8px;font-size:16px;">considers generalizability of findings to author/provider’s own</div>
<div class="d" style="left:530px;top:772.7px;font-size:16px;">practice; considers similarities and differences in beliefs, values and</div>
<div class="d" style="left:530px;top:790.3px;font-size:16px;">characteristics of population/setting. <b style="color:#b3202c">*</b></div>
<div class="d" style="left:483px;top:807.5px;font-size:13.33px;font-style:italic;color:#a31d2b;-webkit-text-stroke:0.25px #a31d2b">* see chapter 5 in text for what elements to consider for each level of evidence and examples</div>
<div class="d b" style="left:992px;width:119px;text-align:center;top:287.5px;color:#b01e24">/5</div>
<div class="d b" style="left:990px;width:119px;text-align:center;top:364.5px;color:#b01e24">/10</div>
<div class="d b" style="left:990px;width:119px;text-align:center;top:488.5px;color:#b01e24">/15</div>
<div class="d b" style="left:990px;width:119px;text-align:center;top:702.5px;color:#b01e24">/15</div>
</div>
<!-- webcam -->
<div class="a" style="left:1181px;top:650px;width:320px;height:180px;overflow:hidden"><svg class="a" style="left:0;top:0;filter:blur(0.6px)" width="320" height="180" viewBox="0 0 320 180">
 <defs>
  <linearGradient id="wl" x1="0" y1="0" x2="1" y2="0"><stop offset="0" stop-color="#aea28a"/><stop offset="0.5" stop-color="#bcb098"/><stop offset="1" stop-color="#b0a48c"/></linearGradient>
  <linearGradient id="wr" x1="0" y1="0" x2="1" y2="0"><stop offset="0" stop-color="#7e7058"/><stop offset="0.25" stop-color="#8a7c60"/><stop offset="0.27" stop-color="#9a8c6e"/><stop offset="1" stop-color="#a39576"/></linearGradient>
  <linearGradient id="cur" x1="0" y1="0" x2="1" y2="0">
   <stop offset="0" stop-color="#142248"/><stop offset="0.04" stop-color="#7aaee6"/><stop offset="0.08" stop-color="#1a3068"/>
   <stop offset="0.13" stop-color="#1c346c"/><stop offset="0.16" stop-color="#98c8f2"/><stop offset="0.19" stop-color="#1a3068"/>
   <stop offset="0.25" stop-color="#22407a"/><stop offset="0.29" stop-color="#c0e0f8"/><stop offset="0.33" stop-color="#1e3a74"/>
   <stop offset="0.4" stop-color="#2a4c8c"/><stop offset="0.43" stop-color="#7aa8e0"/><stop offset="0.47" stop-color="#182c5e"/>
   <stop offset="0.56" stop-color="#1c3266"/><stop offset="0.6" stop-color="#5a88c8"/><stop offset="0.64" stop-color="#16285a"/>
   <stop offset="0.72" stop-color="#1a2e60"/><stop offset="0.75" stop-color="#8ab8ea"/><stop offset="0.79" stop-color="#182a5a"/>
   <stop offset="0.88" stop-color="#2a4c88"/><stop offset="0.92" stop-color="#3a62a0"/><stop offset="1" stop-color="#121e40"/>
  </linearGradient>
  <linearGradient id="hair" x1="0" y1="0" x2="1" y2="0"><stop offset="0" stop-color="#c4b89a"/><stop offset="0.3" stop-color="#ddd4bc"/><stop offset="0.7" stop-color="#d8ceb4"/><stop offset="1" stop-color="#b8ac90"/></linearGradient>
  <filter id="bl" x="-2%" y="-2%" width="104%" height="104%"><feGaussianBlur stdDeviation="0.7"/></filter>
 </defs>
 <g>
 <rect width="320" height="180" fill="#b4a88e"/>
 <polygon points="0,0 70,0 0,35" fill="#9c9e8a"/>
 <rect x="64" y="0" width="14" height="180" fill="#a89a82"/>
 <rect x="0" y="68" width="39" height="66" fill="#2e2a28"/>
 <rect x="0" y="83" width="27" height="39" fill="#e2e6dc"/>
 <rect x="0" y="126" width="36" height="4" fill="#4a4440"/>
 <rect x="0" y="148" width="31" height="18" fill="#3a3d3b"/>
 <rect x="0" y="164" width="50" height="16" fill="#2a2e2f"/>
 <rect x="210" y="0" width="110" height="180" fill="url(#wr)"/>
 <rect x="77" y="0" width="12" height="180" fill="#181c28"/>
 <polygon points="88,0 210,0 212,180 88,180" fill="url(#cur)"/>
 <polygon points="165,0 212,0 212,20" fill="#161e36"/>
 <g stroke="#14244a" stroke-width="3" opacity="0.75">
  <line x1="88" y1="26" x2="212" y2="28"/><line x1="88" y1="60" x2="212" y2="62"/><line x1="88" y1="95" x2="212" y2="97"/><line x1="88" y1="129" x2="212" y2="131"/><line x1="88" y1="166" x2="212" y2="167"/>
 </g>
 <rect x="219" y="64" width="87" height="116" fill="#a8733e"/>
 <rect x="217" y="63" width="92" height="6" fill="#7a5028"/>
 <rect x="222" y="72" width="38" height="76" fill="#b27e48"/>
 <rect x="264" y="72" width="36" height="76" fill="#ad7944"/>
 <rect x="260" y="72" width="4" height="76" fill="#8a5a2c"/>
 <rect x="219" y="150" width="87" height="30" fill="#8e5e30"/>
 <rect x="232" y="156" width="36" height="17" fill="#566050"/>
 <rect x="221" y="46" width="25" height="18" fill="#e8eaee"/><rect x="224" y="49" width="19" height="12" fill="#8a9ab4"/>
 <circle cx="254" cy="59" r="6.5" fill="#d02a2c"/>
 <rect x="263" y="55" width="19" height="9" fill="#dde2e8"/><rect x="265" y="57" width="15" height="6" fill="#5c80b8"/>
 <ellipse cx="290" cy="60" rx="7" ry="5" fill="#3060b0"/>
 <path d="M244 40c-2-8 4-14 8-12 2-5 8-5 10 0 5-2 9 4 6 10 3 4-1 9-6 8-3 3-10 3-13 0-4 1-7-2-5-6z" fill="#4e4030"/>
 <rect x="251" y="42" width="10" height="14" fill="#4a2820"/>
 <rect x="217" y="100" width="44" height="80" rx="6" fill="#1a242c"/>
 <rect x="224" y="104" width="12" height="30" rx="4" fill="#34444e"/>
 <polygon points="110,180 128,148 160,135 212,135 245,158 262,180" fill="#272d33"/>
 <path d="M186 67c-22 0-33 14-36 38-3 28-4 50-7 75h84c-3-25-5-48-8-75-3-24-12-38-33-38z" fill="url(#hair)"/>
 <path d="M186 76c-14 0-21 10-22 26-1 16-1 26 3 36 5 10 11 16 19 16s15-6 19-16c4-10 4-20 3-36-1-16-8-26-22-26z" fill="#c2aa9a"/>
 <path d="M162 88c6-12 16-17 28-15 10 2 17 9 20 16-8-5-18-7-28-6-8 1-14 3-20 5z" fill="#e0d8c2"/>
 <path d="M170 140c5 16 10 30 16 30s11-14 16-30l-8 6h-16z" fill="#b09a8a"/>
 <polygon points="163,168 186,178 209,168 216,180 156,180" fill="#272d33"/>
 <rect x="167" y="98" width="18" height="12" rx="3" fill="#a8aab0" stroke="#151518" stroke-width="2.2"/>
 <rect x="189" y="98" width="18" height="12" rx="3" fill="#a8aab0" stroke="#151518" stroke-width="2.2"/>
 <rect x="149" y="112" width="14" height="68" fill="#d4caae" opacity="0.9"/>
 <rect x="208" y="112" width="14" height="62" fill="#cfc4a8" opacity="0.9"/>
 </g>
</svg></div>

</body></html>
